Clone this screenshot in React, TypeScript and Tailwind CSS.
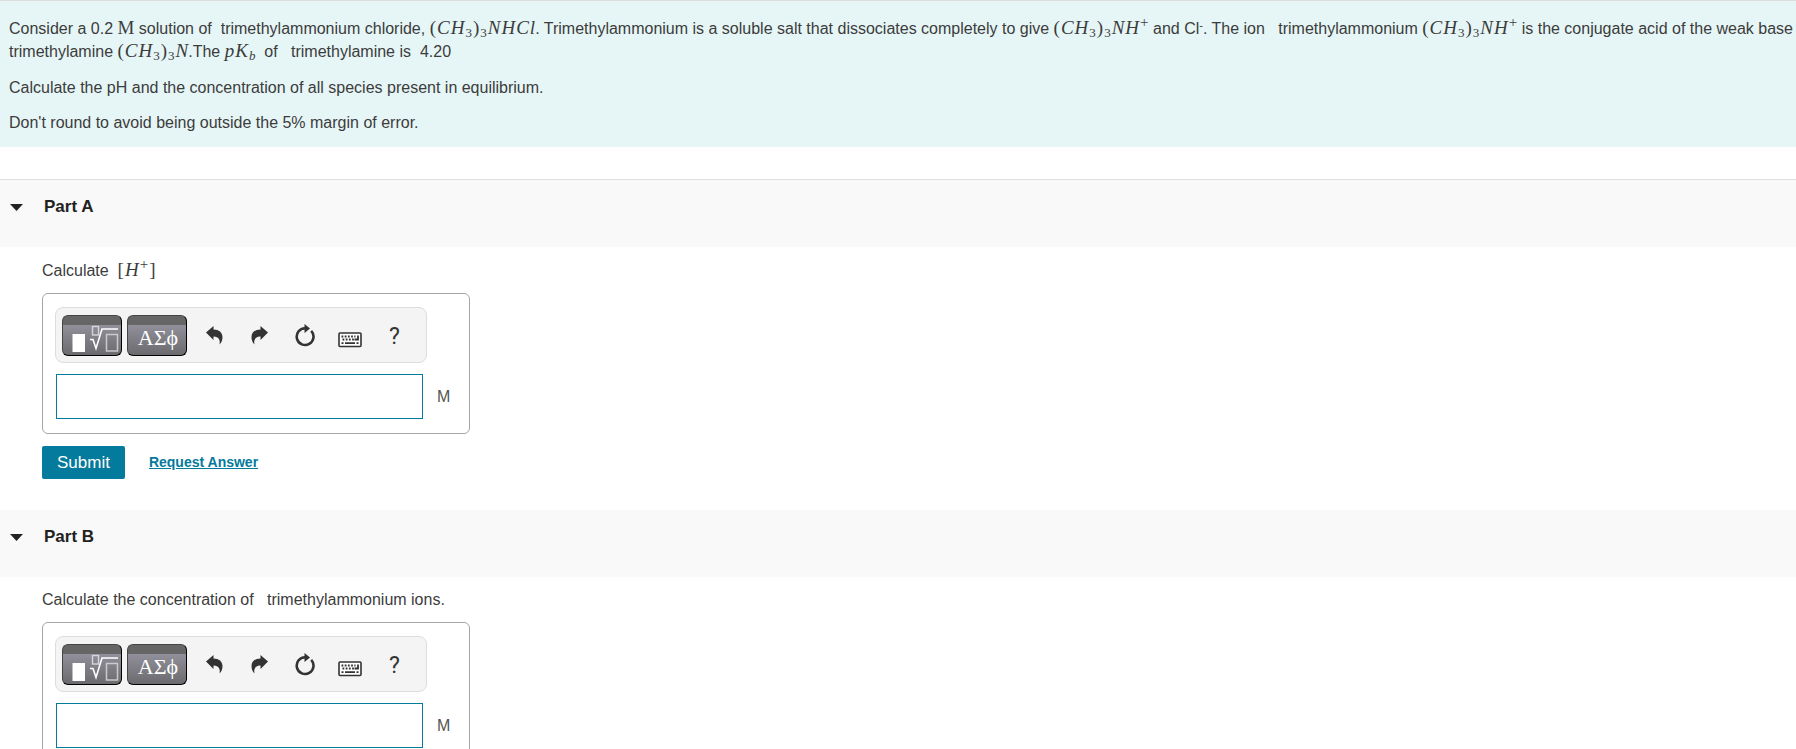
import * as React from "react"

const PARTS = [
  {
    id: "a",
    title: "Part A",
    headerClass: "border-t border-[#dddddd]",
    question: (
      <>
        Calculate{"\u00a0 "}
        <Formula>
          <Upright>[</Upright>
          <span>H</span>
          <Sup>+</Sup>
          <Upright>]</Upright>
        </Formula>
      </>
    ),
  },
  {
    id: "b",
    title: "Part B",
    headerClass: "",
    question: <>Calculate the concentration of{"\u00a0\u00a0 "}trimethylammonium ions.</>,
  },
]

function Formula({ children }: { children: React.ReactNode }) {
  return (
    <span className="inline-flex items-baseline gap-px font-['Liberation_Serif',serif] text-[19px] leading-5 italic">
      {children}
    </span>
  )
}

function Upright({ children }: { children: React.ReactNode }) {
  return <span className="not-italic">{children}</span>
}

function Sub({ children }: { children: React.ReactNode }) {
  return <sub className="text-[13px] leading-none not-italic">{children}</sub>
}

function Sup({ children }: { children: React.ReactNode }) {
  return <sup className="text-[15px] leading-none not-italic">{children}</sup>
}

/* (CH3)3 group shared by every species */
function Trimethyl() {
  return (
    <>
      <Upright>(</Upright>
      <span>C</span>
      <span>H</span>
      <Sub>3</Sub>
      <Upright>)</Upright>
      <Sub>3</Sub>
      <span>N</span>
    </>
  )
}

function Ion() {
  return (
    <Formula>
      <Trimethyl />
      <span>H</span>
      <Sup>+</Sup>
    </Formula>
  )
}

function Introduction() {
  return (
    <section className="border-t border-[#dddddd] bg-[#e6f6f6] pt-4 pb-3.5 pl-[9px]">
      <p className="mb-[15px] leading-[23px]">
        Consider a 0.2 <span className="font-['Liberation_Serif',serif] text-[19px] leading-5">M</span> solution of
        {"\u00a0 "}trimethylammonium chloride,{" "}
        <Formula>
          <Trimethyl />
          <span>H</span>
          <span>C</span>
          <span>l</span>
        </Formula>
        . Trimethylammonium is a soluble salt that dissociates completely to give <Ion /> and Cl
        <sup className="text-[11px] leading-none">-</sup>. The ion{"\u00a0\u00a0 "}trimethylammonium <Ion /> is the
        conjugate acid of the weak base trimethylamine{" "}
        <Formula>
          <Trimethyl />
        </Formula>
        .The{" "}
        <Formula>
          <span>p</span>
          <span>K</span>
          <sub className="text-[13px] leading-none">b</sub>
        </Formula>
        {"\u00a0 "}of{"\u00a0\u00a0 "}trimethylamine is{"\u00a0 "}4.20
      </p>
      <p className="mb-[15px] leading-5">
        Calculate the pH and the concentration of all species present in equilibrium.
      </p>
      <p className="leading-5">Don't round to avoid being outside the 5% margin of error.</p>
    </section>
  )
}

function TemplatesIcon() {
  return (
    <svg width="58" height="39" viewBox="0 0 58 39" fill="none" aria-hidden="true">
      <rect x="9.500" y="18" width="12.500" height="18" fill="#fff" />
      <rect x="29.500" y="10.500" width="6" height="8.500" stroke="#d6d6da" strokeWidth="1.400" />
      <path d="M27 23.500h3l3 9 6-19.500h16" stroke="#fff" strokeWidth="1.600" />
      <rect x="43.500" y="18.500" width="11" height="16.500" stroke="#c9c9ce" strokeWidth="1.500" />
    </svg>
  )
}

function UndoIcon() {
  return (
    <svg width="17" height="19" viewBox="0 0 17 19" fill="#333" aria-hidden="true">
      <path d="M0 6.500 7.500 0v3.500C13 3.500 16.500 6.500 16.500 11c0 3-1 5.500-3 7.500 1-4-.5-8-6-8V14z" />
    </svg>
  )
}

function RedoIcon() {
  return (
    <svg width="17" height="19" viewBox="0 0 17 19" fill="#333" aria-hidden="true">
      <path d="M17 6.500 9.500 0v3.500C4 3.500.5 6.500.5 11c0 3 1 5.500 3 7.500-1-4 .5-8 6-8V14z" />
    </svg>
  )
}

function ResetIcon() {
  return (
    <svg width="20" height="23" viewBox="0 0 20 23" fill="none" aria-hidden="true">
      <path d="M16.200 6.800A8.400 8.400 0 1 1 10 4.200" stroke="#333" strokeWidth="2.600" />
      <path d="M9.500 0l5.500 4.500L9.500 9z" fill="#333" />
    </svg>
  )
}

function KeyboardIcon() {
  return (
    <svg width="24" height="26" viewBox="0 0 24 26" aria-hidden="true">
      <g transform="translate(0 4)">
        <rect x="1" y="7" width="22" height="13.500" rx="1" fill="#fff" stroke="#333" strokeWidth="1.600" />
        <path d="M3.500 10.500h14M4.500 13.500h12" stroke="#333" strokeWidth="1.800" strokeDasharray="1.800 1.400" />
        <path d="M20 9.500v4h-3.500" fill="none" stroke="#333" strokeWidth="1.800" />
        <path d="M3.500 17.200h2M7 17.200h10M18.500 17.200h2" stroke="#333" strokeWidth="1.800" />
      </g>
    </svg>
  )
}

const TOOLS = [
  { label: "Undo", icon: <UndoIcon /> },
  { label: "Redo", icon: <RedoIcon /> },
  { label: "Reset", icon: <ResetIcon /> },
  { label: "Keyboard shortcuts", icon: <KeyboardIcon /> },
  { label: "Help", icon: <span className="pt-1 font-[Roboto,sans-serif] text-[23px]">?</span> },
]

function Toolbar() {
  return (
    <div role="toolbar" className="flex h-14 items-center rounded-lg border border-[#dddddd] bg-[#f4f4f4] pl-1.5">
      <div className="mr-[5px] flex gap-[5px]">
        <button
          type="button"
          aria-label="Templates"
          className="h-[41px] w-[60px] overflow-hidden rounded-md border border-[#444444] border-r-black border-b-black bg-linear-to-b from-[#666666] from-22% via-[#92909b] via-22% to-[#6b6b6e]"
        >
          <TemplatesIcon />
        </button>
        <button
          type="button"
          aria-label="Symbols"
          className="h-[41px] w-[60px] rounded-md border border-[#444444] border-r-black border-b-black bg-linear-to-b from-[#666666] from-22% via-[#92909b] via-22% to-[#6b6b6e] pt-1.5 pl-0.5 font-['Liberation_Serif',serif] text-[22px] leading-8 text-white"
        >
          ΑΣϕ
        </button>
      </div>
      {TOOLS.map((tool) => (
        <button
          key={tool.label}
          type="button"
          aria-label={tool.label}
          className="flex h-10 w-[45px] items-center justify-center text-[#333333]"
        >
          {tool.icon}
        </button>
      ))}
    </div>
  )
}

function AnswerBox({ id }: { id: string }) {
  return (
    <div className="w-[428px] rounded-md border border-[#a6a6a6] pt-[13px] pr-[42px] pb-3.5 pl-3">
      <Toolbar />
      <div className="mt-[11px] ml-px flex items-center gap-3.5">
        <input
          id={`answer-${id}`}
          type="text"
          className="h-[45px] w-[367px] shrink-0 border border-[#047a9c] bg-white px-2 outline-none"
        />
        <label htmlFor={`answer-${id}`} className="text-[#555555]">
          M
        </label>
      </div>
    </div>
  )
}

export default function App() {
  return (
    <main className="min-h-screen bg-white font-['Liberation_Sans',Arial,sans-serif] text-[16px] text-[#3c3c3c]">
      <Introduction />
      <div className="mt-8">
        {PARTS.map((part) => (
          <section key={part.id}>
            <header className={`bg-[#f9f9f9] ${part.headerClass}`}>
              <h2 className="h-[67px] pt-[17px] pl-[10px]">
                <button type="button" className="flex items-center gap-[21px] text-[17px] leading-5 font-bold text-[#222222]">
                  <svg width="13" height="7" viewBox="0 0 13 7" fill="#222" aria-hidden="true">
                    <path d="M0 0h13L6.500 7z" />
                  </svg>
                  {part.title}
                </button>
              </h2>
            </header>
            <div className="px-[42px] pt-[13px] pb-[31px]">
              <p className="mb-3 leading-5">{part.question}</p>
              <AnswerBox id={part.id} />
              <div className="mt-3 flex items-center gap-6">
                <button type="button" className="h-[33px] rounded-xs bg-[#047a9c] px-[15px] text-[17px] text-white">
                  Submit
                </button>
                <a href="#answer" className="text-[14px] font-bold text-[#047a9c] underline">
                  Request Answer
                </a>
              </div>
            </div>
          </section>
        ))}
      </div>
    </main>
  )
}
